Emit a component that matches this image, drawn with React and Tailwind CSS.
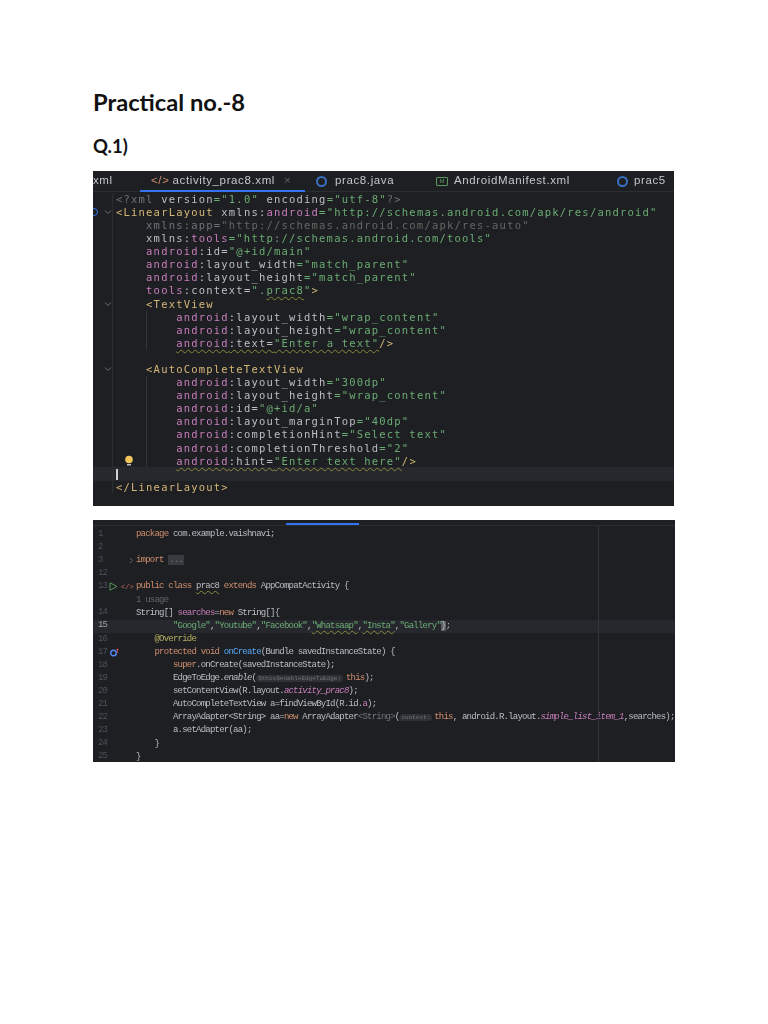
import React from "react";

const tag = "text-[#d5b778]";
const attr = "text-[#bcbec4]";
const ns = "text-[#c77dbb]";
const str = "text-[#6aab73]";
const dim = "text-[#6f737a]";
const squiggle = "underline decoration-wavy decoration-[#8a8a3a] decoration-[1px] underline-offset-2";

const xmlLines = [
  [["<?xml ", dim], ["version", attr], ["=", str], ['"1.0" ', str], ["encoding", attr], ['="utf-8"', str], ["?>", dim]],
  [["<LinearLayout ", tag], ["xmlns:", attr], ["android", ns], ['="http://schemas.android.com/apk/res/android"', str]],
  [["    xmlns:app=", dim], ['"http://schemas.android.com/apk/res-auto"', "text-[#5d6b60]"]],
  [["    xmlns:", attr], ["tools", ns], ['="http://schemas.android.com/tools"', str]],
  [["    "], ["android", ns], [":id=", attr], ['"@+id/main"', str]],
  [["    "], ["android", ns], [":layout_width", attr], ['="match_parent"', str]],
  [["    "], ["android", ns], [":layout_height", attr], ['="match_parent"', str]],
  [["    "], ["tools", ns], [":context=", attr], ['".', str], ["prac8", `${str} ${squiggle}`], ['"', str], [">", tag]],
  [["    "], ["<TextView", tag]],
  [["        "], ["android", ns], [":layout_width", attr], ['="wrap_content"', str]],
  [["        "], ["android", ns], [":layout_height", attr], ['="wrap_content"', str]],
  [["        "], ["android", `${ns} ${squiggle}`], [":text=", `${attr} ${squiggle}`], ['"Enter a text"', `${str} ${squiggle}`], ["/>", tag]],
  [[" "]],
  [["    "], ["<AutoCompleteTextView", tag]],
  [["        "], ["android", ns], [":layout_width", attr], ['="300dp"', str]],
  [["        "], ["android", ns], [":layout_height", attr], ['="wrap_content"', str]],
  [["        "], ["android", ns], [":id=", attr], ['"@+id/a"', str]],
  [["        "], ["android", ns], [":layout_marginTop", attr], ['="40dp"', str]],
  [["        "], ["android", ns], [":completionHint", attr], ['="Select text"', str]],
  [["        "], ["android", ns], [":completionThreshold", attr], ['="2"', str]],
  [["        "], ["android", `${ns} ${squiggle}`], [":hint=", `${attr} ${squiggle}`], ['"Enter text here"', `${str} ${squiggle}`], ["/>", tag]],
  [[" "]],
  [["</LinearLayout>", tag]],
];

const kw = "text-[#cf8e6d]";
const plain = "text-[#bcbec4]";
const field = "text-[#c77dbb]";
const javaStr = "text-[#6aab73]";
const anno = "text-[#b3ae60]";
const blue = "text-[#56a8f5]";
const hint = "rounded-sm bg-[#2f3136] px-[2px] text-[#6f737a] text-[6px] tracking-normal";

const javaLines = [
  ["1", [["package", kw], [" com.example.vaishnavi;", plain]]],
  ["2", []],
  ["3", [["import", kw], [" "], ["...", "bg-[#393b40] text-[#6f737a] px-[1px]"]]],
  ["12", []],
  ["13", [["public class ", kw], ["prac8", `${plain} ${squiggle}`], [" extends ", kw], ["AppCompatActivity {", plain]]],
  ["", [["1 usage", "text-[#5f6369]"]]],
  ["14", [["String[] ", plain], ["searches", field], ["=", plain], ["new ", kw], ["String[]{", plain]]],
  ["15", [["        "], ["\"Google\"", javaStr], [",", plain], ["\"Youtube\"", javaStr], [",", plain], ["\"Facebook\"", javaStr], [",", plain], ["\"Whatsaap\"", `${javaStr} ${squiggle}`], [",", plain], ["\"Insta\"", `${javaStr} ${squiggle}`], [",", plain], ["\"Gallery\"", javaStr], ["}", "bg-[#5a5f66] text-[#bcbec4]"], [";", plain]]],
  ["16", [["    "], ["@Override", anno]]],
  ["17", [["    "], ["protected void ", kw], ["onCreate", blue], ["(Bundle savedInstanceState) {", plain]]],
  ["18", [["        "], ["super", kw], [".onCreate(savedInstanceState);", plain]]],
  ["19", [["        "], ["EdgeToEdge.", plain], ["enable", `${plain} italic`], ["(", plain], ["$this$enableEdgeToEdge:", hint], ["this", `${kw} ml-[3px]`], [");", plain]]],
  ["20", [["        "], ["setContentView(R.layout.", plain], ["activity_prac8", `${field} italic`], [");", plain]]],
  ["21", [["        "], ["AutoCompleteTextView a=findViewById(R.id.", plain], ["a", field], [");", plain]]],
  ["22", [["        "], ["ArrayAdapter<String> aa=", plain], ["new ", kw], ["ArrayAdapter", plain], ["<String>", dim], ["(", plain], ["context:", hint], ["this", `${kw} ml-[2px]`], [", android.R.layout.", plain], ["simple_list_item_1", `${field} italic`], [",searches);", plain]]],
  ["23", [["        "], ["a.setAdapter(aa);", plain]]],
  ["24", [["    }", plain]]],
  ["25", [["}", plain]]],
];

function Segments({ parts }) {
  return parts.map(([text, cls], i) => (
    <span key={i} className={cls}>
      {text}
    </span>
  ));
}

function Chevron() {
  return (
    <svg width="8" height="6" viewBox="0 0 8 6" fill="none" stroke="#6f737a" strokeWidth="1">
      <path d="M1 1.5 4 4.5 7 1.5" />
    </svg>
  );
}

function XmlGutter({ index }) {
  if (index === 1) {
    return (
      <div className="flex items-center gap-[6px]">
        <div className="ml-[-3px] h-[8px] w-[8px] rounded-full border border-[#3574f0]" />
        <Chevron />
      </div>
    );
  }
  if (index === 8 || index === 13) {
    return (
      <div className="pl-[11px]">
        <Chevron />
      </div>
    );
  }
  return null;
}

function XmlCode() {
  return (
    <div className="flex flex-col pt-[0.5px] font-['DejaVu_Sans_Mono',monospace] text-[10.5px] tracking-[1.2px] blur-[0.45px]">
      {xmlLines.map((line, i) => {
        const guide = (i >= 9 && i <= 11) || (i >= 14 && i <= 20);
        return (
          <div key={i} className={`flex h-[13.1px] items-center ${i === 21 ? "bg-[#26282e]" : ""}`}>
            <div className="flex h-full w-[20px] shrink-0 items-center border-r border-[#2b2d30]">
              <XmlGutter index={i} />
            </div>
            {i === 20 && (
              <svg className="absolute ml-[30px]" width="12" height="12" viewBox="0 0 12 12">
                <circle cx="6" cy="4.5" r="3.8" fill="#f2c55c" />
                <rect x="4" y="9" width="4" height="1.5" fill="#b8bcc4" />
              </svg>
            )}
            <div className="relative flex h-full flex-1 items-center whitespace-pre pl-[3px] leading-none">
              {guide && <div className="absolute left-[33px] top-0 h-full w-px bg-[#313438]" />}
              {i === 21 && <div className="h-[11px] w-[2px] bg-[#ced0d6]" />}
              <Segments parts={line} />
            </div>
          </div>
        );
      })}
    </div>
  );
}

function JavaGutter({ num }) {
  return (
    <div className="relative flex w-[43px] shrink-0 items-center pl-[5px]">
      <span className={`w-[11px] ${num === "15" ? "text-[#a1a3ab]" : "text-[#4b5059]"}`}>{num}</span>
      {num === "3" && (
        <svg className="absolute left-[36px]" width="5" height="7" viewBox="0 0 5 7" fill="none" stroke="#6f737a" strokeWidth=".8">
          <path d="M1 1 3.5 3.5 1 6" />
        </svg>
      )}
      {num === "13" && (
        <div className="flex items-center gap-[3px]">
          <svg width="9" height="9" viewBox="0 0 9 9" fill="none" stroke="#57965c" strokeWidth="1">
            <path d="M1 .8 8 4.5 1 8.2Z" />
          </svg>
          <span className="text-[7px] tracking-normal text-[#c7715f]">{"</>"}</span>
        </div>
      )}
      {num === "17" && (
        <svg className="ml-[1px]" width="9" height="9" viewBox="0 0 9 9" fill="none">
          <circle cx="3.5" cy="5" r="2.8" stroke="#548af7" strokeWidth="1.4" />
          <path d="M7.5 5V1M6.4 2 7.5 .8 8.6 2" stroke="#e05555" strokeWidth=".8" />
        </svg>
      )}
    </div>
  );
}

function JavaCode() {
  return (
    <div className="relative font-['Liberation_Mono',monospace] text-[9px] tracking-[-0.78px] blur-[0.35px]">
      <div className="relative h-[6px] border-b border-[#2b2d30]">
        <div className="absolute bottom-0 left-[193px] h-[2px] w-[73px] bg-[#3574f0]" />
      </div>
      <div className="absolute bottom-0 left-[505px] top-[6px] w-px bg-[#33353a]" />
      <div className="flex flex-col pt-[2px]">
        {javaLines.map(([num, parts], i) => (
          <div key={i} className={`flex h-[13.1px] items-center whitespace-pre ${num === "15" ? "bg-[#26282e]" : ""}`}>
            <JavaGutter num={num} />
            <div className="leading-none">
              <Segments parts={parts} />
            </div>
          </div>
        ))}
      </div>
    </div>
  );
}

export default function App() {
  return (
    <div className="min-h-screen bg-white px-[93px] pt-[86px] font-['Lato',sans-serif] text-[#111111]">
      <h1 className="h-[32px] text-[23.7px] font-bold leading-[32px]">Practical no.-8</h1>
      <h2 className="mt-[16px] h-[24px] text-[18.5px] font-bold leading-[24px]">Q.1)</h2>

      {/* first screenshot */}
      <div className="mt-[13px] h-[335px] w-[581px] overflow-hidden bg-[#1e1f22]">
        <div className="flex h-[21px] items-center border-b border-[#2b2d30] font-['Liberation_Sans',sans-serif] text-[11.5px] tracking-[0.62px] text-[#c4c6cc] blur-[0.35px]">
          <span className="w-[47px]">xml</span>
          <div className="relative flex h-full w-[165px] items-center pl-[11px]">
            <span className="text-[#cf8e6d]">{"</>"}</span>
            <span className="ml-[3px] whitespace-nowrap">activity_prac8.xml</span>
            <span className="ml-[9px] text-[#5f6369]">×</span>
            <div className="absolute bottom-[-1px] left-0 h-[2px] w-full bg-[#3574f0]" />
          </div>
          <div className="ml-[11px] flex w-[120px] items-center gap-[8px]">
            <div className="h-[11px] w-[11px] rounded-full border-2 border-[#3a6fc4]" />
            <span>prac8.java</span>
          </div>
          <div className="flex w-[181px] items-center gap-[6px]">
            <div className="flex h-[9px] w-[12px] items-center justify-center rounded-[1px] border border-[#57965c] text-[6px] tracking-normal text-[#57965c]">M</div>
            <span className="whitespace-nowrap">AndroidManifest.xml</span>
          </div>
          <div className="flex items-center gap-[6px]">
            <div className="h-[11px] w-[11px] rounded-full border-2 border-[#3a6fc4]" />
            <span>prac5</span>
          </div>
        </div>
        <XmlCode />
      </div>

      {/* second screenshot */}
      <div className="mt-[14px] h-[242px] w-[582px] overflow-hidden bg-[#1e1f22]">
        <JavaCode />
      </div>
    </div>
  );
}
